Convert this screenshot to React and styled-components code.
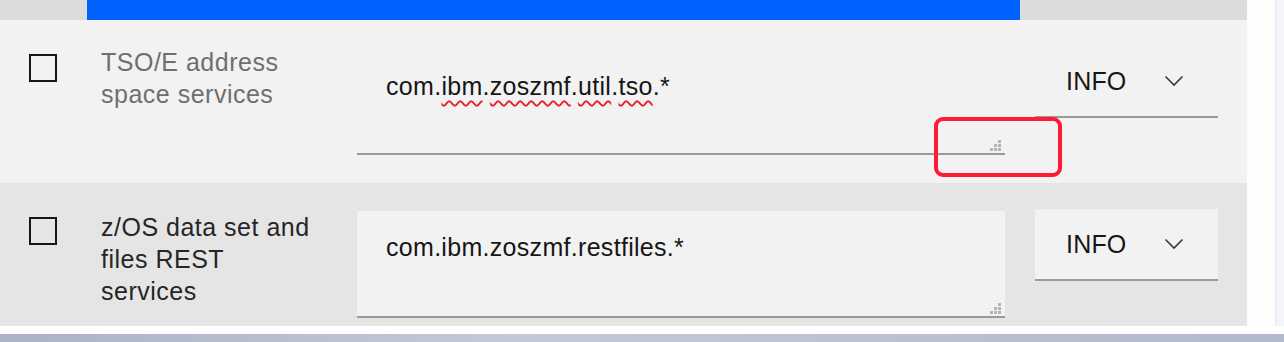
import styled, { createGlobalStyle } from 'styled-components'

const GlobalStyle = createGlobalStyle`
  html, body {
    margin: 0;
    padding: 0;
    background: #ffffff;
  }
  body {
    font-family: "Liberation Sans", Arial, sans-serif;
  }
`

const Page = styled.div`
  width: 1284px;
  height: 342px;
  display: flex;
  flex-direction: column;
  overflow: hidden;
`

const Top = styled.div`
  display: flex;
  height: 326px;
`

const Main = styled.div`
  position: relative;
  width: 1247px;
  display: flex;
  flex-direction: column;
`

const SideStrip = styled.div`
  flex: 1;
  display: flex;
  justify-content: flex-end;
  background: #fdfdfe;
`

const SideEdge = styled.div`
  width: 8px;
  background: #f3f5fa;
  border-left: 1px solid #e6e9f0;
`

const ProgressTrack = styled.div`
  height: 20px;
  background: #dcdcdc;
  display: flex;
`

const ProgressFill = styled.div`
  margin-left: 87px;
  width: 933px;
  background: #0062ff;
`

const Row = styled.div`
  height: ${({ $height }) => $height}px;
  background: ${({ $alt }) => ($alt ? '#e5e5e5' : '#f2f2f2')};
  display: flex;
  align-items: flex-start;
  padding-left: 29px;
  box-sizing: border-box;
`

const Checkbox = styled.span`
  margin-top: 34px;
  width: 28px;
  height: 28px;
  box-sizing: border-box;
  border: 2px solid #161616;
  flex-shrink: 0;
`

const Label = styled.div`
  margin-top: ${({ $top }) => $top}px;
  margin-left: 44px;
  width: 217px;
  margin-right: 13px;
  font-size: 25px;
  line-height: 32px;
  letter-spacing: 0.5px;
  color: ${({ $muted }) => ($muted ? '#6f6f6f' : '#262626')};
`

const Field = styled.div`
  position: relative;
  margin-top: ${({ $top }) => $top}px;
  margin-left: 26px;
  width: 648px;
  height: ${({ $height }) => $height}px;
  box-sizing: border-box;
  padding: ${({ $pad }) => $pad}px 29px 0;
  background: ${({ $bare }) => ($bare ? 'transparent' : '#f2f2f2')};
  border-bottom: 2px solid #9a9a9a;
  font-size: 25px;
  line-height: 32px;
  letter-spacing: 0.3px;
  color: #161616;
`

const Misspelt = styled.span`
  text-decoration: underline wavy #e8202a;
  text-decoration-thickness: 1.5px;
  text-underline-offset: 5px;
`

const Grip = styled.svg`
  position: absolute;
  right: 4px;
  bottom: 2px;
`

const Select = styled.div`
  margin-top: 26px;
  margin-left: 30px;
  width: 183px;
  height: 72px;
  box-sizing: border-box;
  padding: 0 34px 0 31px;
  background: ${({ $bare }) => ($bare ? 'transparent' : '#f2f2f2')};
  border-bottom: 2px solid #9a9a9a;
  display: flex;
  align-items: center;
  justify-content: space-between;
  font-size: 25px;
  letter-spacing: 0.2px;
  color: #161616;
`

const Callout = styled.div`
  position: absolute;
  left: 934px;
  top: 117px;
  width: 128px;
  height: 60px;
  box-sizing: border-box;
  border: 4px solid #ff1a3a;
  border-radius: 9px;
`

const WhiteBand = styled.div`
  height: 8px;
  background: #ffffff;
`

const DesktopBand = styled.div`
  flex: 1;
  background: linear-gradient(90deg, #aab4c6, #c3c9d6 40%, #b1bacb);
`

function ResizeGrip() {
  const dots = [
    [12, 0],
    [8, 4], [12, 4],
    [4, 8], [8, 8], [12, 8],
  ]
  return (
    <Grip width="15" height="11" viewBox="0 0 15 11">
      {dots.map(([x, y]) => (
        <rect key={`${x}-${y}`} x={x} y={y} width="3" height="3" fill="#b4b4b4" />
      ))}
    </Grip>
  )
}

function Chevron() {
  return (
    <svg width="20" height="12" viewBox="0 0 20 12">
      <path d="M1.5 1.5 L10 10 L18.5 1.5" fill="none" stroke="#393939" strokeWidth="1.6" />
    </svg>
  )
}

export default function App() {
  return (
    <Page>
      <GlobalStyle />
      <Top>
        <Main>
          <ProgressTrack>
            <ProgressFill />
          </ProgressTrack>

          <Row $height={163}>
            <Checkbox />
            <Label $top={26} $muted>TSO/E address space services</Label>
            <Field $top={32} $height={103} $pad={18} $bare>
              com.<Misspelt>ibm</Misspelt>.<Misspelt>zoszmf</Misspelt>.<Misspelt>util</Misspelt>.<Misspelt>tso</Misspelt>.*
              <ResizeGrip />
            </Field>
            <Select $bare>
              INFO
              <Chevron />
            </Select>
          </Row>

          <Row $height={143} $alt>
            <Checkbox />
            <Label $top={28}>z/OS data set and files REST services</Label>
            <Field $top={28} $height={107} $pad={20}>
              com.ibm.zoszmf.restfiles.*
              <ResizeGrip />
            </Field>
            <Select>
              INFO
              <Chevron />
            </Select>
          </Row>

          <Callout />
        </Main>
        <SideStrip>
          <SideEdge />
        </SideStrip>
      </Top>
      <WhiteBand />
      <DesktopBand />
    </Page>
  )
}
